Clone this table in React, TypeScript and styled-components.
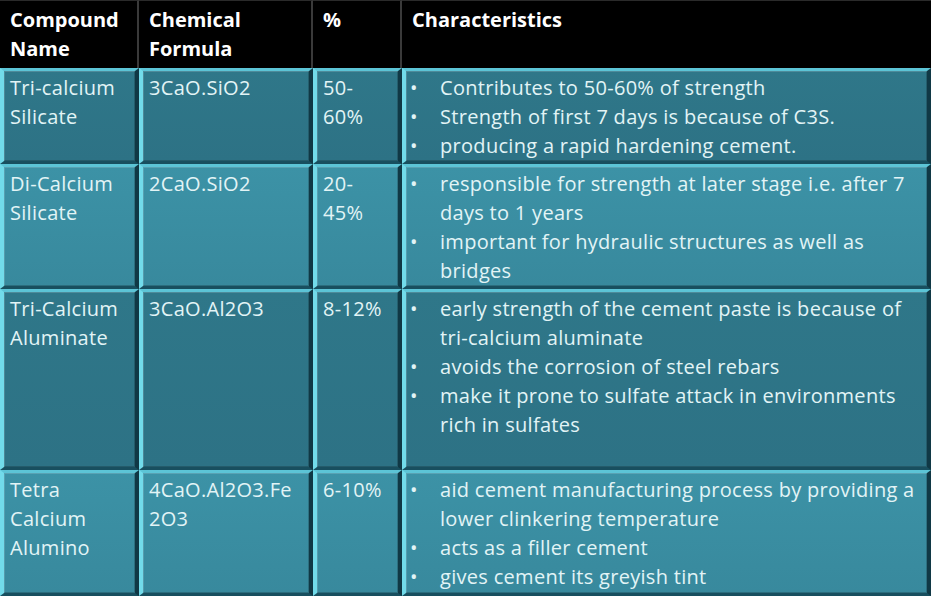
import React from "react";
import styled, { createGlobalStyle, css } from "styled-components";

const Global = createGlobalStyle`
  html, body { margin: 0; padding: 0; background: #000; }
  body { width: 931px; height: 596px; overflow: hidden; }
`;

const Table = styled.div`
  display: grid;
  grid-template-columns: 139px 174px 89px 1fr;
  grid-template-rows: 68px 96px 125px 181px 126px;
  width: 931px;
  height: 596px;
  font-family: "Open Sans", "Noto Sans", sans-serif;
  font-size: 20px;
  letter-spacing: 0.3px;
  line-height: 29px;
  overflow: hidden;
`;

const HeadCell = styled.div<{ $last?: boolean }>`
  background: #000;
  color: #fff;
  font-weight: 700;
  letter-spacing: 0;
  padding: 4px 6px 0 10px;
  border-right: ${(p) => (p.$last ? "none" : "2px solid #3a3a3a")};
  border-top: 1px solid #2a2a2a;
  white-space: nowrap;
`;

const Cell = styled.div<{ $tone: "dark" | "light" }>`
  ${(p) =>
    p.$tone === "dark"
      ? css`
          background: linear-gradient(#2f7789, #2d7285);
        `
      : css`
          background: linear-gradient(#3c92a6, #38899d);
        `}
  color: #e2f4f6;
  border-left: 4px solid #72dbea;
  border-top: 3px solid #5cc4d6;
  border-right: 4px solid #103845;
  border-bottom: 3px solid #184f5f;
  box-shadow: inset 1px 1px 0 rgba(255, 255, 255, 0.15),
    inset -1px -1px 0 rgba(0, 0, 0, 0.2);
  padding: 2px 4px 0 6px;
  white-space: nowrap;
  overflow: hidden;
`;

const List = styled.div`
  display: flex;
  flex-direction: column;
  margin-left: -4px;
`;

const Item = styled.div`
  display: grid;
  grid-template-columns: 32px 1fr;
`;

const Bullet = styled.span`
  padding-left: 2px;
`;

type Row = {
  tone: "dark" | "light";
  name: string[];
  formula: string[];
  pct: string[];
  items: string[][];
};

const rows: Row[] = [
  {
    tone: "dark",
    name: ["Tri-calcium", "Silicate"],
    formula: ["3CaO.SiO2"],
    pct: ["50-", "60%"],
    items: [
      ["Contributes to 50-60% of strength"],
      ["Strength of first 7 days is because of C3S."],
      ["producing a rapid hardening cement."],
    ],
  },
  {
    tone: "light",
    name: ["Di-Calcium", "Silicate"],
    formula: ["2CaO.SiO2"],
    pct: ["20-", "45%"],
    items: [
      ["responsible for strength at later stage i.e. after 7", "days to 1 years"],
      ["important for hydraulic structures as well as", "bridges"],
    ],
  },
  {
    tone: "dark",
    name: ["Tri-Calcium", "Aluminate"],
    formula: ["3CaO.Al2O3"],
    pct: ["8-12%"],
    items: [
      ["early strength of the cement paste is because of", "tri-calcium aluminate"],
      ["avoids the corrosion of steel rebars"],
      ["make it prone to sulfate attack in environments", "rich in sulfates"],
    ],
  },
  {
    tone: "light",
    name: ["Tetra", "Calcium", "Alumino"],
    formula: ["4CaO.Al2O3.Fe", "2O3"],
    pct: ["6-10%"],
    items: [
      ["aid cement manufacturing process by providing a", "lower clinkering temperature"],
      ["acts as a filler cement"],
      ["gives cement its greyish tint"],
    ],
  },
];

const Lines = ({ lines }: { lines: string[] }) => (
  <>
    {lines.map((l, i) => (
      <div key={i}>{l}</div>
    ))}
  </>
);

export default function App() {
  return (
    <>
      <Global />
      <Table>
        <HeadCell>
          <Lines lines={["Compound", "Name"]} />
        </HeadCell>
        <HeadCell>
          <Lines lines={["Chemical", "Formula"]} />
        </HeadCell>
        <HeadCell>%</HeadCell>
        <HeadCell $last>Characteristics</HeadCell>
        {rows.map((r, ri) => (
          <React.Fragment key={ri}>
            <Cell $tone={r.tone}>
              <Lines lines={r.name} />
            </Cell>
            <Cell $tone={r.tone}>
              <Lines lines={r.formula} />
            </Cell>
            <Cell $tone={r.tone}>
              <Lines lines={r.pct} />
            </Cell>
            <Cell $tone={r.tone}>
              <List>
                {r.items.map((it, ii) => (
                  <Item key={ii}>
                    <Bullet>•</Bullet>
                    <div>
                      <Lines lines={it} />
                    </div>
                  </Item>
                ))}
              </List>
            </Cell>
          </React.Fragment>
        ))}
      </Table>
    </>
  );
}
